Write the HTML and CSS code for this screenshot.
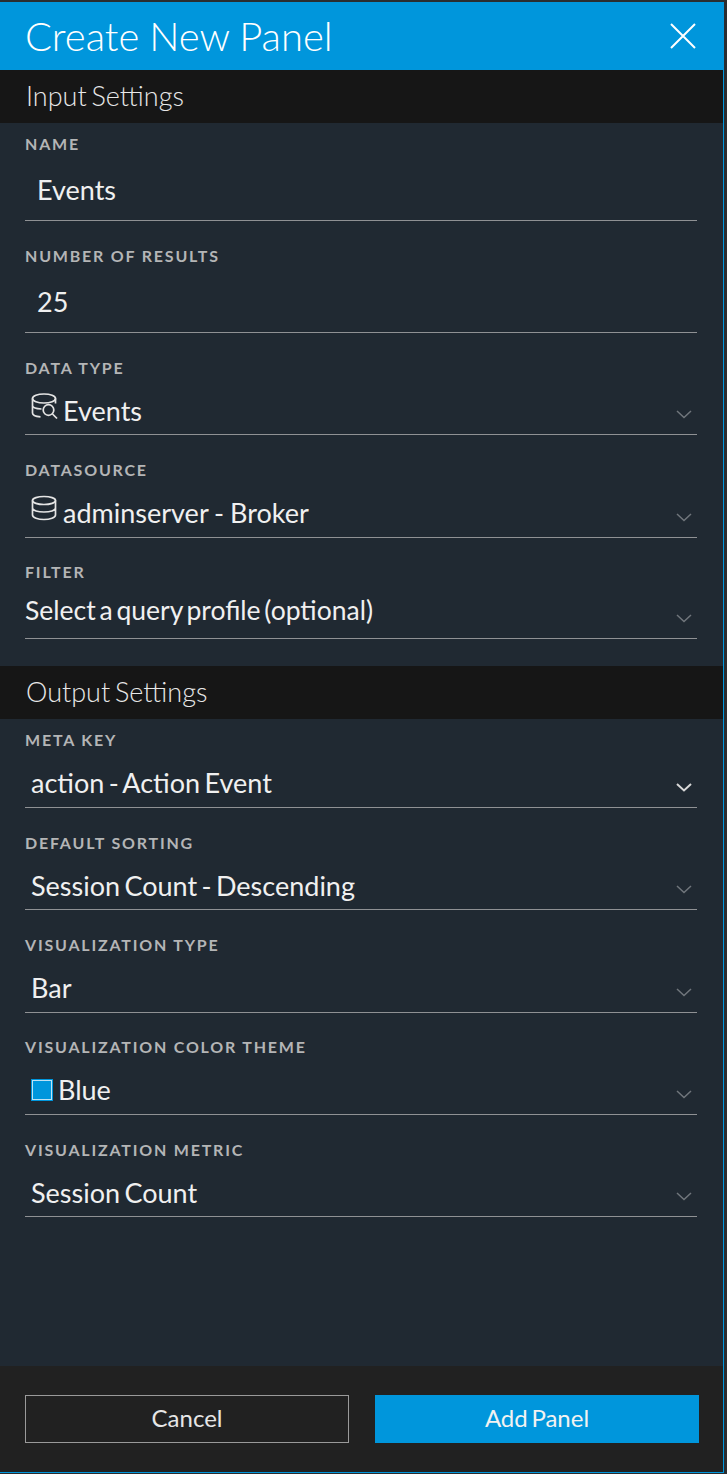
FILE: index.html
```html
<!DOCTYPE html>
<html lang="en">
<head>
    <meta charset="UTF-8">
    <title>Create New Panel</title>
    <link rel="stylesheet" href="styles.css">
</head>
<body>

<div class="panel">
    <div class="panel-header">
        <h1>Create New Panel</h1>
        <svg class="close-icon" width="26" height="26" viewBox="0 0 26 26"><path d="M1 1 L25 25 M25 1 L1 25"/></svg>
    </div>

    <div class="panel-body">
        <h2 class="section-title">Input Settings</h2>
        <div class="section">
            <div class="field field-input">
                <label>NAME</label>
                <div class="value">Events</div>
            </div>
            <div class="field field-input">
                <label>NUMBER OF RESULTS</label>
                <div class="value">25</div>
            </div>
            <div class="field field-select field-short">
                <label>DATA TYPE</label>
                <div class="value">
                    <svg class="db-icon" width="27" height="27" viewBox="0 0 27 27"><ellipse cx="13" cy="5.5" rx="11.5" ry="4.5"/><path d="M1.5 5.5 V20 C1.5 22 5 23.5 9.5 23.8 M24.5 5.5 V10.5 M1.5 12.5 C1.5 14.500 5 15.800 10.500 16"/><circle cx="17.5" cy="17" r="5.3"/><path d="M21.5 21 L26 25.5"/></svg>
                    <span>Events</span>
                </div>
                <svg class="chevron" width="16" height="9" viewBox="0 0 16 9"><path d="M1 1 L8 7.5 L15 1"/></svg>
            </div>
            <div class="field field-select field-tall">
                <label>DATASOURCE</label>
                <div class="value value-wide">
                    <svg class="db-icon" width="27" height="27" viewBox="0 0 27 27"><ellipse cx="13" cy="5.5" rx="11.5" ry="4"/><path d="M1.5 5.5 V20 C1.5 22.5 7 24.5 13 24.5 C19 24.5 24.5 22.5 24.5 20 V5.5 M1.5 13 C1.5 15.5 7 17 13 17 C19 17 24.5 15.5 24.5 13"/></svg>
                    <span>adminserver - Broker</span>
                </div>
                <svg class="chevron" width="16" height="9" viewBox="0 0 16 9"><path d="M1 1 L8 7.5 L15 1"/></svg>
            </div>
            <div class="field field-select field-plain">
                <label>FILTER</label>
                <div class="value"><span>Select a query profile (optional)</span></div>
                <svg class="chevron" width="16" height="9" viewBox="0 0 16 9"><path d="M1 1 L8 7.5 L15 1"/></svg>
            </div>
        </div>

        <h2 class="section-title">Output Settings</h2>
        <div class="section section-output">
            <div class="field field-select">
                <label>META KEY</label>
                <div class="value"><span>action - Action Event</span></div>
                <svg class="chevron chevron-bright" width="16" height="9" viewBox="0 0 16 9"><path d="M1 1 L8 7.5 L15 1"/></svg>
            </div>
            <div class="field field-select">
                <label>DEFAULT SORTING</label>
                <div class="value"><span>Session Count - Descending</span></div>
                <svg class="chevron" width="16" height="9" viewBox="0 0 16 9"><path d="M1 1 L8 7.5 L15 1"/></svg>
            </div>
            <div class="field field-select">
                <label>VISUALIZATION TYPE</label>
                <div class="value"><span>Bar</span></div>
                <svg class="chevron" width="16" height="9" viewBox="0 0 16 9"><path d="M1 1 L8 7.5 L15 1"/></svg>
            </div>
            <div class="field field-select field-theme">
                <label>VISUALIZATION COLOR THEME</label>
                <div class="value">
                    <i class="swatch"></i>
                    <span>Blue</span>
                </div>
                <svg class="chevron" width="16" height="9" viewBox="0 0 16 9"><path d="M1 1 L8 7.5 L15 1"/></svg>
            </div>
            <div class="field field-select">
                <label>VISUALIZATION METRIC</label>
                <div class="value"><span>Session Count</span></div>
                <svg class="chevron" width="16" height="9" viewBox="0 0 16 9"><path d="M1 1 L8 7.5 L15 1"/></svg>
            </div>
        </div>
    </div>

    <div class="panel-footer">
        <button type="button" class="btn btn-cancel">Cancel</button>
        <button type="button" class="btn btn-add">Add Panel</button>
    </div>
</div>

</body>
</html>
```

FILE: styles.css
```css
html, body {
    margin: 0;
    padding: 0;
    height: 100%;
}
body {
    background: #2a2d30;
    font-family: Lato, "Open Sans", sans-serif;
    color: #f0f0f0;
    overflow: hidden;
}
.panel {
    box-sizing: border-box;
    width: 724px;
    height: 1471px;
    margin-top: 2px;
    background: #202932;
    border-right: 1px solid #0096dc;
    border-bottom: 1px solid #0096dc;
    display: flex;
    flex-direction: column;
}
.panel-header {
    height: 68px;
    flex: none;
    background: #0096dc;
    display: flex;
    align-items: center;
    justify-content: space-between;
    padding: 0 27px 0 25px;
}
.panel-header h1 {
    margin: 0;
    font-size: 40px;
    font-weight: 300;
    word-spacing: -1px;
    color: #fff;
}
.close-icon path {
    fill: none;
    stroke: #fff;
    stroke-width: 2;
}
.panel-body {
    flex: 1;
}
.section-title {
    margin: 0;
    height: 53px;
    line-height: 52px;
    padding-left: 26px;
    background: #161616;
    font-size: 27px;
    font-weight: 300;
    word-spacing: -2.5px;
    color: #e8e8e8;
}
.section {
    padding: 12px 26px 27px 25px;
}
.section-output {
    padding-top: 12.2px;
}
.field {
    position: relative;
    border-bottom: 1px solid #8f9194;
}
.field label {
    display: block;
    height: 18px;
    line-height: 18px;
    font-size: 16px;
    font-weight: 700;
    letter-spacing: 1.8px;
    color: #b4b5b6;
}
.value {
    box-sizing: border-box;
    display: flex;
    align-items: center;
    font-size: 27px;
    word-spacing: -2.5px;
    color: #f0f0f0;
}
.field-input {
    margin-bottom: 26px;
}
.field-input .value {
    height: 67px;
    padding: 6px 0 0 12px;
}
.field-select {
    margin-bottom: 25.8px;
}
.field-select:last-child {
    margin-bottom: 0;
}
.field-select .value {
    height: 57.6px;
    padding: 10px 0 0 6px;
}
.field-short {
    margin-bottom: 26px;
}
.field-short .value {
    height: 57px;
}
.field-tall {
    margin-bottom: 25px;
}
.field-tall .value {
    height: 58px;
    padding-top: 9px;
}
.field-theme .value {
    padding-top: 9px;
}
.value-wide {
    word-spacing: -1px;
}
.field-select.field-plain .value {
    height: 57px;
    padding: 0;
    font-size: 26.5px;
    word-spacing: -3px;
}
.db-icon {
    margin-right: 5px;
    flex: none;
    position: relative;
    top: -4px;
}
.db-icon ellipse, .db-icon path, .db-icon circle {
    fill: none;
    stroke: #e4e4e4;
    stroke-width: 1.7;
}
.swatch {
    box-sizing: border-box;
    width: 22px;
    height: 22px;
    margin-right: 5px;
    background: #0096dc;
    border: 1px solid #0096dc;
    box-shadow: inset 0 0 0 1px #bfe3f5;
}
.chevron {
    position: absolute;
    right: 5px;
    bottom: 15px;
}
.chevron path {
    fill: none;
    stroke: #70767c;
    stroke-width: 1.5;
}
.chevron-bright path {
    stroke: #d8d8d8;
    stroke-width: 2;
}
.panel-footer {
    height: 106px;
    flex: none;
    box-sizing: border-box;
    background: #212121;
    padding: 29px 24px 0 25px;
    display: flex;
    justify-content: space-between;
}
.btn {
    box-sizing: border-box;
    width: 324px;
    height: 48px;
    padding: 0 0 3px;
    font-family: inherit;
    font-size: 24px;
    word-spacing: -2.5px;
    color: #e6e6e6;
    cursor: pointer;
}
.btn-cancel {
    background: transparent;
    border: 1px solid #9a9a9a;
}
.btn-add {
    background: #0096dc;
    border: none;
    color: #f2f2f2;
}
```
